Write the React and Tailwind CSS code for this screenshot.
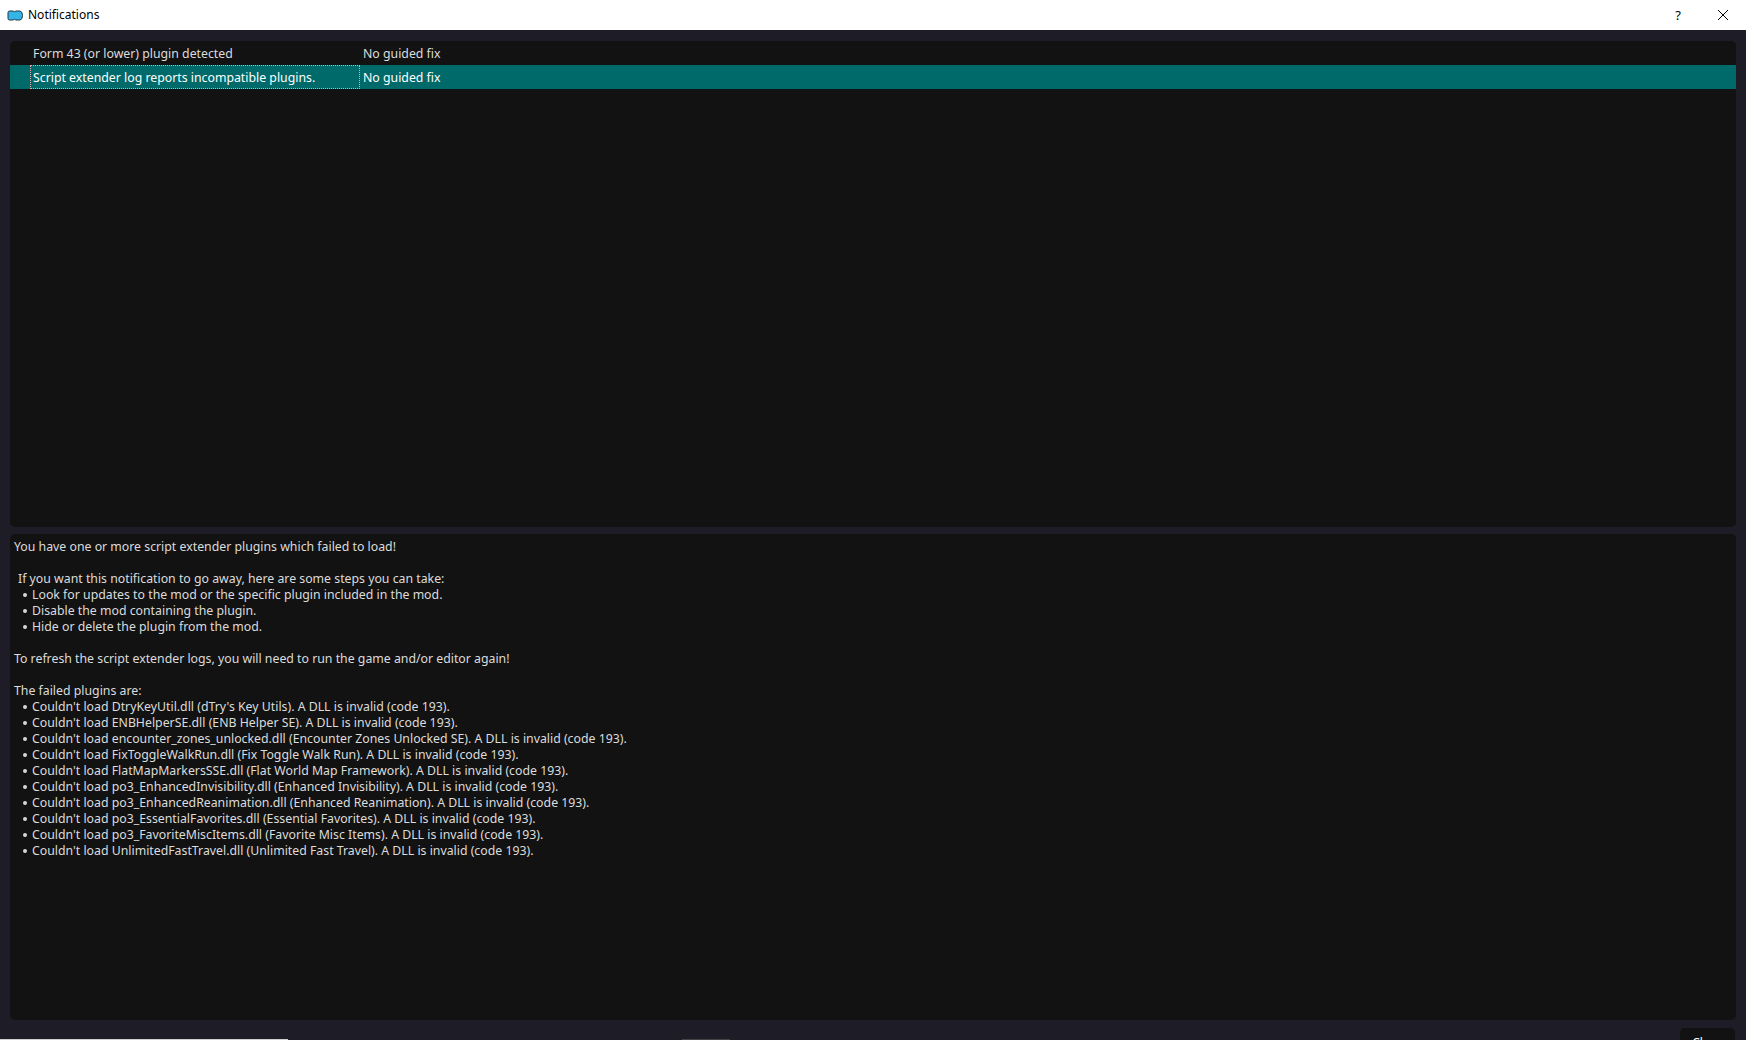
const steps = [
  "Look for updates to the mod or the specific plugin included in the mod.",
  "Disable the mod containing the plugin.",
  "Hide or delete the plugin from the mod.",
];
const failed = [
  "Couldn't load DtryKeyUtil.dll (dTry's Key Utils). A DLL is invalid (code 193).",
  "Couldn't load ENBHelperSE.dll (ENB Helper SE). A DLL is invalid (code 193).",
  "Couldn't load encounter_zones_unlocked.dll (Encounter Zones Unlocked SE). A DLL is invalid (code 193).",
  "Couldn't load FixToggleWalkRun.dll (Fix Toggle Walk Run). A DLL is invalid (code 193).",
  "Couldn't load FlatMapMarkersSSE.dll (Flat World Map Framework). A DLL is invalid (code 193).",
  "Couldn't load po3_EnhancedInvisibility.dll (Enhanced Invisibility). A DLL is invalid (code 193).",
  "Couldn't load po3_EnhancedReanimation.dll (Enhanced Reanimation). A DLL is invalid (code 193).",
  "Couldn't load po3_EssentialFavorites.dll (Essential Favorites). A DLL is invalid (code 193).",
  "Couldn't load po3_FavoriteMiscItems.dll (Favorite Misc Items). A DLL is invalid (code 193).",
  "Couldn't load UnlimitedFastTravel.dll (Unlimited Fast Travel). A DLL is invalid (code 193).",
];

function Bullet({ children }) {
  return (
    <div className="flex h-4 items-center pl-[9px]">
      <span className="mr-[5px] h-[4px] w-[4px] rounded-full bg-[#d8d8d8]" />
      <span>{children}</span>
    </div>
  );
}

export default function App() {
  return (
    <div className="flex h-[1040px] w-[1746px] flex-col overflow-hidden bg-[#1e1c26] font-['Noto_Sans',sans-serif] text-[12.3px] leading-4 text-[#dcdcdc]">
      <div className="flex h-[30px] flex-none items-center bg-white text-[12px] text-black">
        <svg className="ml-[7px] h-[11px] w-[16px]" viewBox="0 0 16 11">
          <path d="M1 2.5 Q1 1 2.5 1 H6 Q7.5 2.5 9 1 H13 Q15.5 1.5 15.5 5.5 Q15.5 9.5 13 10 H9 Q7.5 8.5 6 10 H2.5 Q1 10 1 8.5 Z" fill="#33b5e8" stroke="#23364a" strokeWidth="1" />
        </svg>
        <span className="ml-[5px]">Notifications</span>
        <span className="ml-auto mr-[37px] text-[13px]">?</span>
        <svg className="mr-[18px] h-[10px] w-[10px]" viewBox="0 0 10 10" stroke="#000" strokeWidth="1" fill="none">
          <path d="M0 0 L10 10 M10 0 L0 10" />
        </svg>
      </div>

      <div className="flex min-h-0 flex-1 flex-col px-[10px] pt-[11px]">
        <div className="h-[486px] flex-none overflow-hidden rounded-[5px] bg-[#121212]">
          <div className="flex h-6 items-center pt-[2px]">
            <span className="ml-[20px] w-[330px] flex-none pl-[3px]">Form 43 (or lower) plugin detected</span>
            <span className="ml-[3px]">No guided fix</span>
          </div>
          <div className="flex h-6 items-center bg-[#006a6a] text-white">
            <span className="ml-[20px] flex h-6 w-[330px] flex-none items-center border border-dotted border-[#f0a0a0] pl-[2px] pt-[2px]">Script extender log reports incompatible plugins.</span>
            <span className="ml-[3px] pt-[2px]">No guided fix</span>
          </div>
        </div>

        <div className="mt-[7px] h-[486px] flex-none overflow-hidden rounded-[5px] bg-[#121212] pl-[4px] pt-[5px]">
          <div>You have one or more script extender plugins which failed to load!</div>
          <div className="h-4" />
          <div className="pl-[4px]">If you want this notification to go away, here are some steps you can take:</div>
          {steps.map((s) => <Bullet key={s}>{s}</Bullet>)}
          <div className="h-4" />
          <div>To refresh the script extender logs, you will need to run the game and/or editor again!</div>
          <div className="h-4" />
          <div>The failed plugins are:</div>
          {failed.map((s) => <Bullet key={s}>{s}</Bullet>)}
        </div>
      </div>

      <div className="relative h-[20px] flex-none">
        <div className="absolute bottom-0 left-0 h-px w-[288px] bg-[#d0d0d0]" />
        <div className="absolute bottom-0 left-[682px] h-px w-[48px] bg-[#444]" />
        <div className="absolute right-[11px] top-[8px] h-[12px] w-[55px] overflow-hidden rounded-t-[5px] bg-[#121212] pt-[7px] text-center text-[12px] text-white">Close</div>
      </div>
    </div>
  );
}
